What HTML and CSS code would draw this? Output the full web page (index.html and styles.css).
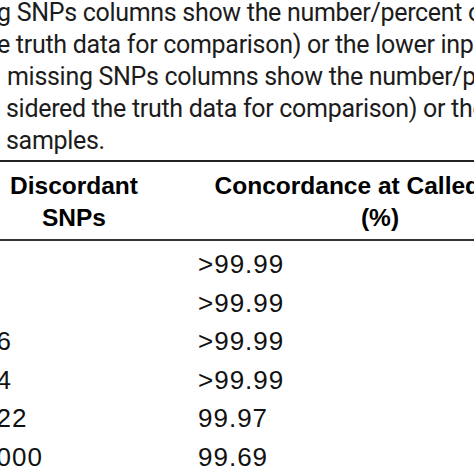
FILE: index.html
```html
<!DOCTYPE html>
<html lang="en">
<head>
  <meta charset="UTF-8">
  <meta name="viewport" content="width=device-width, initial-scale=1.0">
  <title>SNP concordance table</title>
  <link rel="stylesheet" href="styles.css">
</head>
<body>

  <!-- Table caption (cropped on both sides) -->
  <div class="caption">
    <div class="cap-line cap-1">g SNPs columns show the number/percent of</div>
    <div class="cap-line cap-2">e truth data for comparison) or the lower input</div>
    <div class="cap-line cap-3">missing SNPs columns show the number/percent</div>
    <div class="cap-line cap-4">sidered the truth data for comparison) or the</div>
    <div class="cap-line cap-5">samples.</div>
  </div>

  <!-- Concordance table -->
  <div class="snp-table">
    <div class="row head">
      <div class="cell">Discordant<br>SNPs</div>
      <div class="cell">Concordance at Called Sites<br>(%)</div>
    </div>
    <div class="body">
      <div class="row"><div class="cell">0</div><div class="cell">&gt;99.99</div></div>
      <div class="row"><div class="cell">2</div><div class="cell">&gt;99.99</div></div>
      <div class="row"><div class="cell">16</div><div class="cell">&gt;99.99</div></div>
      <div class="row"><div class="cell">14</div><div class="cell">&gt;99.99</div></div>
      <div class="row"><div class="cell">122</div><div class="cell">99.97</div></div>
      <div class="row"><div class="cell">1000</div><div class="cell">99.69</div></div>
    </div>
  </div>

</body>
</html>
```

FILE: styles.css
```css
/* Basic Styles */
* {
  margin: 0;
  padding: 0;
  box-sizing: border-box;
}

html, body {
  width: 474px;
  height: 474px;
  overflow: hidden;
  background-color: #fff;
}

/* Caption */
.caption {
  font-family: 'Roboto', sans-serif;
  font-size: 25px;
  line-height: 32px;
  letter-spacing: -0.3px;
  color: #1c1c1c;
  margin-top: -3px;
  height: 163px;
}

.cap-line {
  white-space: nowrap;
}

.cap-1 { margin-left: -3px; }
.cap-2 { margin-left: -3px; }
.cap-3 { margin-left: 7px; }
.cap-4 { margin-left: 6px; }
.cap-5 { margin-left: 6px; }

/* Table */
.snp-table {
  font-family: 'Liberation Sans', Arial, sans-serif;
  color: #111;
  margin-left: -19px;
  width: 600px;
}

.row {
  display: grid;
  grid-template-columns: 186px 364px;
  column-gap: 31px;
}

.head {
  border-top: 2px solid #222;
  border-bottom: 2px solid #333;
  padding: 8px 0 5px;
  font-weight: bold;
  font-size: 24.5px;
  line-height: 32px;
  color: #000;
}

.head .cell {
  text-align: center;
}

.body {
  padding-top: 4px;
  font-size: 26px;
  line-height: 38.6px;
  letter-spacing: 1px;
}
```
